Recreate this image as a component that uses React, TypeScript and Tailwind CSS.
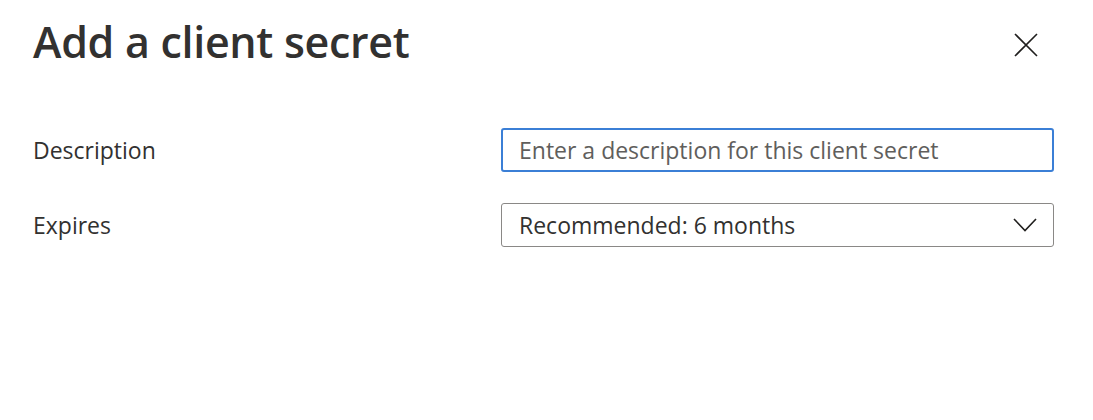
import React from "react";

export default function App() {
  return (
    <div
      className="w-[1093px] h-[420px] bg-white text-[#323130] pl-[33px] pr-[39px]"
      style={{ fontFamily: '"Open Sans", "Noto Sans", sans-serif' }}
    >
      <div className="flex items-start justify-between pt-[12px]">
        <h1 className="text-[43px] leading-[60px] font-semibold tracking-[-0.3px] text-[#323130]">
          Add a client secret
        </h1>
        <button className="mt-[21px] mr-[16px] w-[24px] h-[24px] flex items-center justify-center">
          <svg width="24" height="24" viewBox="0 0 24 24" fill="none">
            <path d="M1 1 L23 23 M23 1 L1 23" stroke="#201f1e" strokeWidth="1.6" />
          </svg>
        </button>
      </div>
      <div className="mt-[56px] flex flex-col gap-[31px]">
        <div className="flex items-center">
          <div className="w-[468px] text-[23px] leading-[30px]">Description</div>
          <div className="flex-1 h-[44px] border-2 border-[#3b7fd6] rounded-[3px] flex items-center px-[16px]">
            <span className="text-[23px] text-[#605e5c]">Enter a description for this client secret</span>
          </div>
        </div>
        <div className="flex items-center">
          <div className="w-[468px] text-[23px] leading-[30px]">Expires</div>
          <div className="flex-1 h-[44px] border border-[#8a8886] rounded-[3px] flex items-center justify-between pl-[17px] pr-[16px]">
            <span className="text-[23px] text-[#323130]">Recommended: 6 months</span>
            <svg width="24" height="14" viewBox="0 0 24 14" fill="none">
              <path d="M1 1 L12 12.5 L23 1" stroke="#201f1e" strokeWidth="1.6" />
            </svg>
          </div>
        </div>
      </div>
    </div>
  );
}
